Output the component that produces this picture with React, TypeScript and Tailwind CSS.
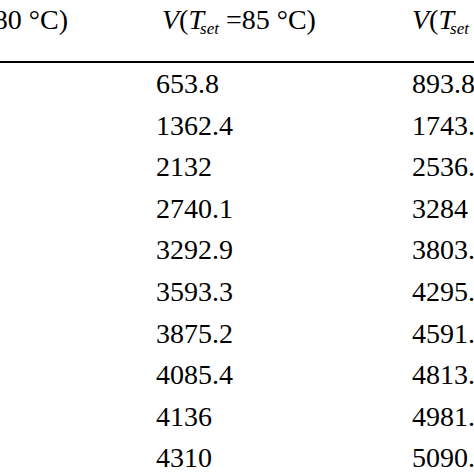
const rows = [
  ['653.8', '893.8'],
  ['1362.4', '1743.'],
  ['2132', '2536.'],
  ['2740.1', '3284'],
  ['3292.9', '3803.'],
  ['3593.3', '4295.'],
  ['3875.2', '4591.'],
  ['4085.4', '4813.'],
  ['4136', '4981.'],
  ['4310', '5090.'],
];

function VHead({ temp }: { temp?: string }) {
  return (
    <span className="whitespace-nowrap">
      <span className="italic">V</span>(<span className="italic">T</span>
      <span className="italic text-[17px] leading-[0] align-[-5px] ml-[-4px]">set</span>
      {temp && (
        <>
          <span className="ml-[7px]">=</span>
          {temp} °C)
        </>
      )}
    </span>
  );
}

export default function App() {
  return (
    <div className="w-[474px] h-[474px] overflow-hidden bg-white text-black text-[28px] font-['Liberation_Serif','Times_New_Roman',serif]">
      {/* Header */}
      <div className="flex h-[61px] leading-[40px]">
        <div className="w-[162px] shrink-0 flex justify-end pr-[94px]">
          <VHead temp="80" />
        </div>
        <div className="w-[250px] shrink-0">
          <VHead temp="85" />
        </div>
        <div className="flex-1 whitespace-nowrap">
          <VHead />
        </div>
      </div>

      <div className="h-[2px] bg-black" />

      {/* Body */}
      <div className="flex flex-col">
        {rows.map(([a, b]) => (
          <div key={a} className="flex h-[41.6px] leading-[41.6px] shrink-0">
            <div className="w-[156px] shrink-0" />
            <div className="w-[256px] shrink-0">{a}</div>
            <div className="flex-1 whitespace-nowrap">{b}</div>
          </div>
        ))}
      </div>
    </div>
  );
}
